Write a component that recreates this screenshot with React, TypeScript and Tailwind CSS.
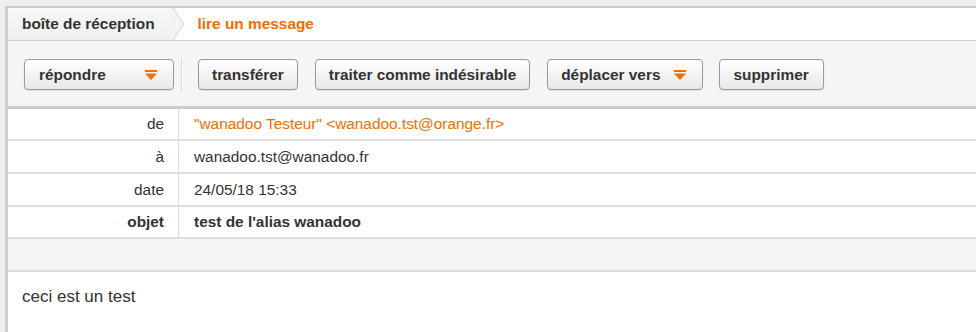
import React from "react";

const ORANGE = "#f16e00";

function Tri() {
  return (
    <svg width="12" height="10" viewBox="0 0 12 10" className="shrink-0">
      <rect x="0" y="0" width="12" height="2" fill={ORANGE} />
      <polygon points="0,3.5 12,3.5 6,10" fill={ORANGE} />
    </svg>
  );
}

function Btn({ children, className = "" }: { children: React.ReactNode; className?: string }) {
  return (
    <div
      className={
        "h-[31px] flex items-center rounded-[4px] border border-[#9a9a9a] bg-gradient-to-b from-[#ffffff] to-[#e8e8e8] shadow-[0_1px_1px_rgba(0,0,0,0.08)] pl-[13px] text-[15.4px] font-bold text-[#333333] whitespace-nowrap " +
        className
      }
    >
      {children}
    </div>
  );
}

function Row({ label, children, h, bold = false }: { label: string; children: React.ReactNode; h: string; bold?: boolean }) {
  return (
    <div className={"flex border-b-2 border-[#dedede] " + h}>
      <div
        className={
          "w-[171px] border-r border-[#dddddd] flex items-center justify-end pr-[14px] text-[15.4px] text-[#333333] " +
          (bold ? "font-bold" : "")
        }
      >
        {label}
      </div>
      <div className={"flex items-center pl-[15px] text-[15.4px] text-[#333333] " + (bold ? "font-bold" : "")}>
        {children}
      </div>
    </div>
  );
}

export default function App() {
  return (
    <div className="w-[976px] h-[332px] overflow-hidden bg-[#efefef] pt-[6px] pl-[5px] font-['Liberation_Sans',Arial,sans-serif]">
      <div className="h-full border-t-2 border-l-[3px] border-[#cccccc] bg-white flex flex-col">
        {/* tab bar */}
        <div className="h-[33px] border-b border-[#d4d4d4] flex items-stretch shrink-0">
          <div className="relative flex items-center pl-[14px] pr-[16px] bg-gradient-to-b from-[#f7f7f7] to-[#efefef] text-[15.4px] font-bold text-[#333333]">
            boîte de réception
          </div>
          <svg width="14" height="32" viewBox="0 0 14 32" className="shrink-0">
            <polygon points="0,0 2,0 13,16 2,32 0,32" fill="#f2f2f2" />
            <polyline points="2,0 13,16 2,32" fill="none" stroke="#dcdcdc" strokeWidth="1.2" />
          </svg>
          <div className="flex items-center pl-[13px] text-[15.4px] font-bold" style={{ color: ORANGE }}>
            lire un message
          </div>
        </div>
        {/* toolbar */}
        <div className="h-[68px] shrink-0 bg-[#f5f5f5] border-b-[3px] border-[#cccccc] flex items-start pt-[18px] pl-[16px]">
          <Btn className="w-[150px] justify-between pl-[14px] pr-[16px]">
            <span>répondre</span>
            <Tri />
          </Btn>
          <div className="w-px h-[34px] -mt-[1px] bg-[#dadada] ml-[7px] mr-[16px] shadow-[1px_0_0_#ffffff]" />
          <Btn className="pr-[13px]">transférer</Btn>
          <Btn className="ml-[17px] pr-[13px]">traiter comme indésirable</Btn>
          <Btn className="ml-[17px] gap-[14px] pr-[16px]">
            <span>déplacer vers</span>
            <Tri />
          </Btn>
          <Btn className="ml-[16px] pr-[14px]">supprimer</Btn>
        </div>
        {/* headers */}
        <Row label="de" h="h-[32px]">
          <span style={{ color: ORANGE }}>"wanadoo Testeur" &lt;wanadoo.tst@orange.fr&gt;</span>
        </Row>
        <Row label="à" h="h-[33px]">wanadoo.tst@wanadoo.fr</Row>
        <Row label="date" h="h-[33px]">24/05/18 15:33</Row>
        <Row label="objet" h="h-[32px]" bold>
          test de l'alias wanadoo
        </Row>
        <div className="h-[33px] shrink-0 bg-[#f5f5f5] border-b-2 border-[#dedede]" />
        <div className="pt-[15px] pl-[14px] text-[17px] leading-[20px] text-[#333333]">ceci est un test</div>
      </div>
    </div>
  );
}
